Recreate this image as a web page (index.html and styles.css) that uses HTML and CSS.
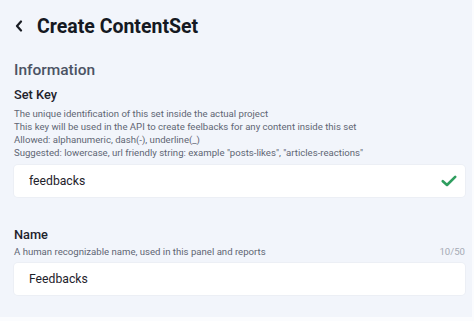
FILE: index.html
```html
<!DOCTYPE html>
<html>
<head>
<meta charset="utf-8">
<link rel="stylesheet" href="styles.css">
</head>
<body>
<div class="panel">
  <header class="head">
    <span class="back">
      <svg width="8" height="12" viewBox="0 0 8 12"><path d="M6 1.5 L2 6 L6 10.5" fill="none" stroke="#1a1d24" stroke-width="2.2" stroke-linecap="round" stroke-linejoin="round"/></svg>
    </span>
    <h1 class="title">Create ContentSet</h1>
  </header>
  <h2 class="section">Information</h2>
  <div class="field">
    <div class="label">Set Key</div>
    <div class="help">
      <div>The unique identification of this set inside the actual project</div>
      <div>This key will be used in the API to create feelbacks for any content inside this set</div>
      <div>Allowed: alphanumeric, dash(-), underline(_)</div>
      <div>Suggested: lowercase, url friendly string: example "posts-likes", "articles-reactions"</div>
    </div>
    <div class="input">
      <span class="value">feedbacks</span>
      <svg class="check" width="16" height="12" viewBox="0 0 16 12"><path d="M1.8 6.2 L6 10 L14.2 1.8" fill="none" stroke="#2f9e5f" stroke-width="2.6" stroke-linecap="round" stroke-linejoin="round"/></svg>
    </div>
  </div>
  <div class="field field2">
    <div class="label">Name</div>
    <div class="help row">
      <span>A human recognizable name, used in this panel and reports</span>
      <span class="count">10/50</span>
    </div>
    <div class="input">
      <span class="value">Feedbacks</span>
    </div>
  </div>
</div>
</body>
</html>
```
FILE: styles.css
```css
html, body {
  margin: 0;
  padding: 0;
  background: #fbfcfe;
}
body {
  width: 474px;
  height: 321px;
  overflow: hidden;
  font-family: Roboto, "Noto Sans", sans-serif;
  color: #1b1f27;
}
.panel {
  box-sizing: border-box;
  width: 472px;
  height: 317px;
  background: #f2f5fb;
  padding: 12px 7px 0 14px;
}
.head {
  display: flex;
  align-items: center;
  gap: 14px;
  height: 28px;
}
.back {
  display: flex;
  width: 8px;
  margin-left: 1px;
}
.title {
  margin: 0;
  font-size: 19.5px;
  font-weight: 700;
  color: #151922;
}
.section {
  margin: 20px 0 0;
  font-size: 15.5px;
  font-weight: 500;
  color: #4b5364;
  line-height: 20px;
}
.field {
  margin-top: 6px;
}
.field2 {
  margin-top: 29px;
}
.label {
  font-size: 12.8px;
  font-weight: 500;
  line-height: 18px;
  color: #1e222b;
}
.help {
  font-size: 9.6px;
  line-height: 13px;
  color: #5f6674;
  margin-top: 3px;
}
.field2 .help {
  margin-top: 1px;
}
.row {
  display: flex;
  justify-content: space-between;
}
.count {
  color: #a6abb5;
}
.input {
  box-sizing: border-box;
  height: 32px;
  margin-top: 6px;
  background: #fff;
  border-radius: 4px;
  display: flex;
  align-items: center;
  justify-content: space-between;
  padding: 0 8px 0 15px;
  box-shadow: 0 0 0 1px #eceff5;
}
.field2 .input {
  margin-top: 5px;
}
.value {
  font-size: 12.2px;
  color: #1e222b;
}
.check {
  display: block;
}
```
